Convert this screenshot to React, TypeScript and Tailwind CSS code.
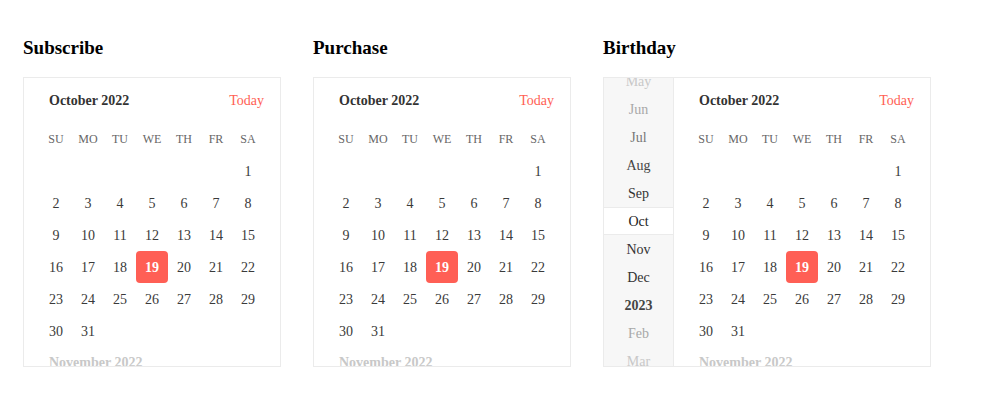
import React from "react";

const WEEKDAYS = ["SU", "MO", "TU", "WE", "TH", "FR", "SA"];

// October 2022 starts on a Saturday
const OCT_CELLS: (number | null)[] = [
  null, null, null, null, null, null,
  ...Array.from({ length: 31 }, (_, i) => i + 1),
];

const MONTHS: { label: string; className: string }[] = [
  { label: "May", className: "text-[#c8c8c8]" },
  { label: "Jun", className: "text-[#a8a8a8]" },
  { label: "Jul", className: "text-[#777]" },
  { label: "Aug", className: "text-[#444]" },
  { label: "Sep", className: "text-[#333]" },
  { label: "Oct", className: "text-[#222] bg-white border-y border-[#ebebeb]" },
  { label: "Nov", className: "text-[#333]" },
  { label: "Dec", className: "text-[#333]" },
  { label: "2023", className: "text-[#444] font-bold" },
  { label: "Feb", className: "text-[#a8a8a8]" },
  { label: "Mar", className: "text-[#c8c8c8]" },
];

function MonthGrid() {
  return (
    <div className="w-[256px] h-[288px] overflow-hidden px-4">
      <div className="flex items-center justify-between h-[45px] pl-[9px]">
        <span className="text-[14px] font-bold text-[#333]">October 2022</span>
        <span className="text-[14px] text-[#ff5f55]">Today</span>
      </div>
      <div className="grid grid-cols-7">
        {WEEKDAYS.map((d) => (
          <div key={d} className="h-8 flex items-center justify-center text-[12px] text-[#666]">
            {d}
          </div>
        ))}
        {OCT_CELLS.map((day, i) => (
          <div key={i} className="h-8 flex items-center justify-center">
            {day !== null &&
              (day === 19 ? (
                <span className="w-8 h-8 rounded-[4px] bg-[#ff5f55] text-white font-bold text-[14px] flex items-center justify-center">
                  19
                </span>
              ) : (
                <span className="text-[14px] text-[#3a3a3a]">{day}</span>
              ))}
          </div>
        ))}
      </div>
      <div className="pl-[9px] pt-[6px] text-[14px] font-bold text-[#c8c8c8] leading-5">
        November 2022
      </div>
    </div>
  );
}

function Panel({ title, children }: { title: string; children: React.ReactNode }) {
  return (
    <div>
      <h2 className="text-[19px] font-bold text-black leading-6 mb-[17px]">{title}</h2>
      <div className="flex border border-[#ebebeb] bg-white">{children}</div>
    </div>
  );
}

export default function App() {
  return (
    <div className="min-h-[407px] bg-white pl-[23px] pt-9 font-['Liberation_Serif',serif] flex gap-8 items-start">
      <Panel title="Subscribe">
        <MonthGrid />
      </Panel>
      <Panel title="Purchase">
        <MonthGrid />
      </Panel>
      <Panel title="Birthday">
        <div className="w-[70px] h-[288px] overflow-hidden bg-[#f7f7f7] border-r border-[#ebebeb]">
          <div className="-mt-[11px]">
            {MONTHS.map((m) => (
              <div
                key={m.label}
                className={`h-7 flex items-center justify-center text-[14px] ${m.className}`}
              >
                {m.label}
              </div>
            ))}
          </div>
        </div>
        <MonthGrid />
      </Panel>
    </div>
  );
}
